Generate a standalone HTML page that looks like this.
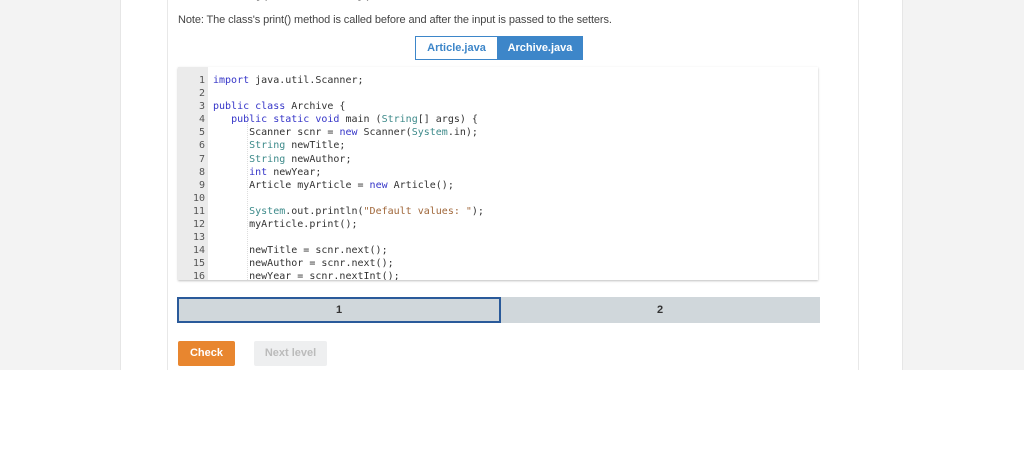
<!DOCTYPE html>
<html><head><style>
*{margin:0;padding:0;box-sizing:border-box}
body{width:1024px;height:455px;background:#fff;position:relative;overflow:hidden;font-family:"Liberation Sans",sans-serif}
.bg{position:absolute;left:0;top:0;width:1024px;height:370px;background:#f3f3f3}
.panel{position:absolute;left:120px;top:0;width:783px;height:370px;background:#fff;border-left:1px solid #e6e6e6;border-right:1px solid #e6e6e6}
.inner{position:absolute;left:167px;top:0;width:692px;height:370px;border-left:1px solid #e8e8e8;border-right:1px solid #e8e8e8}
.clip{position:absolute;left:178px;top:-13px;font-family:"Liberation Mono",monospace;font-size:13px;font-weight:bold;color:#333;white-space:pre}
.note{position:absolute;left:178px;top:14px;font-size:11px;letter-spacing:-0.1px;color:#444}
.tab{position:absolute;top:36px;height:24px;font-size:11px;font-weight:bold;line-height:22px;text-align:center}
.code{position:absolute;left:178px;top:67px;width:640px;height:213px;background:#fff;box-shadow:0 1px 2px rgba(0,0,0,.25);overflow:hidden}
.gut{position:absolute;left:0;top:0;width:30px;height:213px;background:#ebebeb}
.ln,.src{position:absolute;top:7px;font-family:"DejaVu Sans Mono","Liberation Mono",monospace;font-size:10px;line-height:13.1px;white-space:pre;color:#333}
.ln{left:0;width:27px;text-align:right;color:#555}
.src{left:35px}
.guide{position:absolute;left:69px;top:47px;height:170px;border-left:1px dotted #ddd}
.k{color:#3535c8}.t{color:#3d8a8a}.s{color:#a0673a}
.seg{position:absolute;top:297px;height:26px;background:#d0d7db;font-size:11px;font-weight:bold;color:#333;text-align:center;line-height:26px}
.btn{position:absolute;top:341px;height:25px;font-size:11px;font-weight:bold;line-height:25px;text-align:center;border-radius:2px}
</style></head><body>
<div class="bg"></div>
<div class="panel"></div>
<div class="inner"></div>
<div class="clip">Title: Tony, Author: Jay, Year: 200.</div>
<div class="note">Note: The class's print() method is called before and after the input is passed to the setters.</div>
<div class="tab" style="left:415px;width:83px;border:1px solid #3d86c9;color:#3d86c9;background:#fff">Article.java</div>
<div class="tab" style="left:497px;width:86px;background:#3d86c9;color:#fff;line-height:24px">Archive.java</div>
<div class="code"><div class="gut"></div><div class="guide"></div>
<div class="ln">1
2
3
4
5
6
7
8
9
10
11
12
13
14
15
16</div>
<div class="src"><span class="k">import</span> java.util.Scanner;

<span class="k">public class</span> Archive {
   <span class="k">public static void</span> main (<span class="t">String</span>[] args) {
      Scanner scnr = <span class="k">new</span> Scanner(<span class="t">System</span>.in);
      <span class="t">String</span> newTitle;
      <span class="t">String</span> newAuthor;
      <span class="k">int</span> newYear;
      Article myArticle = <span class="k">new</span> Article();

      <span class="t">System</span>.out.println(<span class="s">"Default values: "</span>);
      myArticle.print();

      newTitle = scnr.next();
      newAuthor = scnr.next();
      newYear = scnr.nextInt();</div>
</div>
<div class="seg" style="left:500px;width:320px">2</div>
<div class="seg" style="left:177px;width:324px;border:2px solid #2a5a9a;line-height:22px">1</div>
<div class="btn" style="left:178px;width:57px;background:#e8862f;color:#fff">Check</div>
<div class="btn" style="left:254px;width:73px;background:#eeeff0;color:#bbb">Next level</div>
</body></html>
